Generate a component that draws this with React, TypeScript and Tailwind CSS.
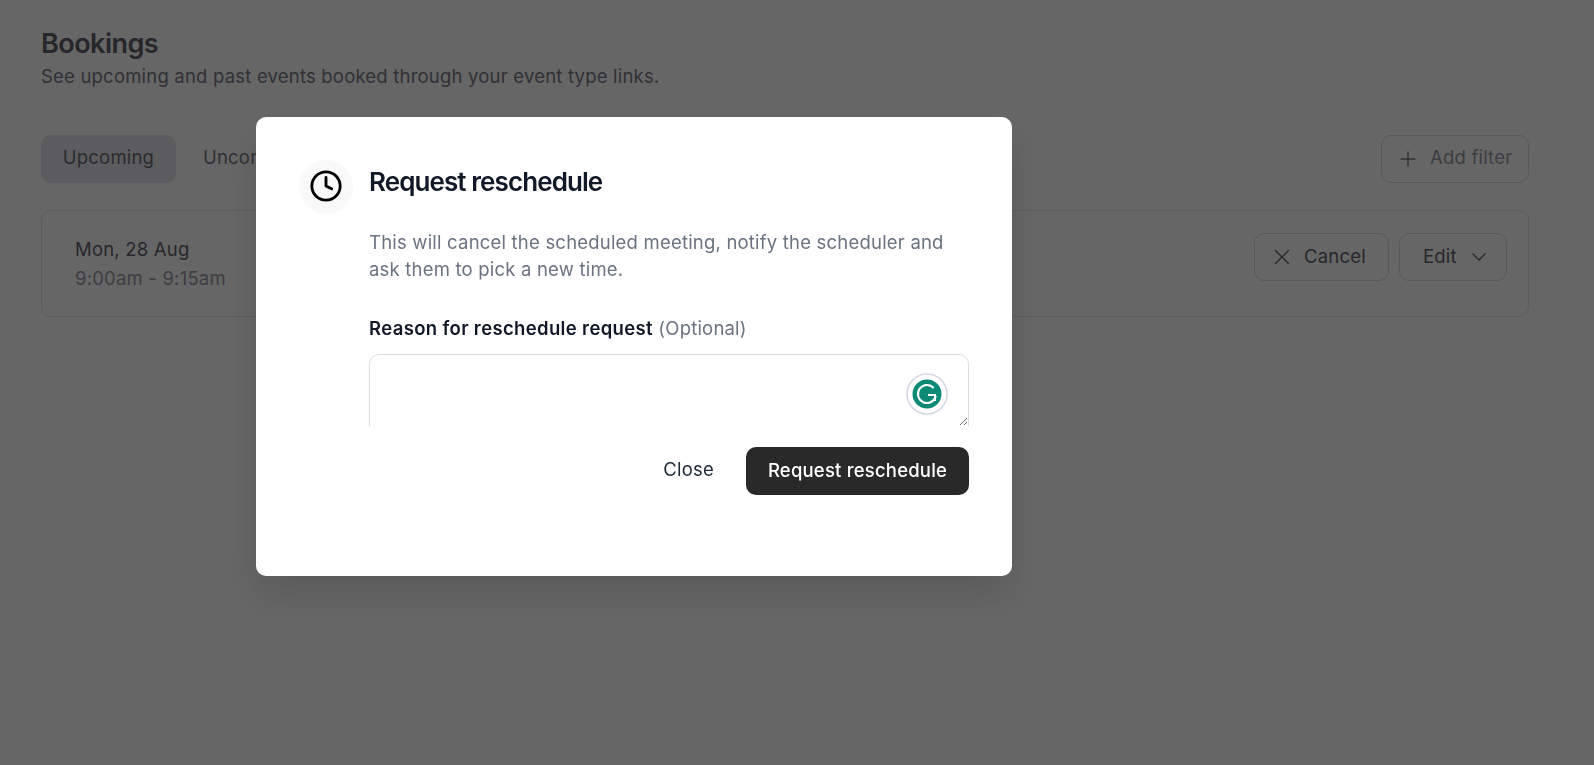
import React from "react";
import { Clock, Plus, X, ChevronDown } from "lucide-react";

export default function App() {
  return (
    <div className="relative h-[765px] w-full overflow-hidden bg-white font-['Inter',sans-serif] text-[18.5px] tracking-[0.2px]">
      <div className="pt-[28px] pr-[65px] pl-[41px]">
        <h1 className="text-[27px] leading-[32px] font-semibold tracking-[-0.02em] text-[#5f5f6b]">Bookings</h1>
        <p className="mt-[2px] leading-[28px] text-[#7a7a88]">See upcoming and past events booked through your event type links.</p>
        <div className="mt-[45px] flex items-center justify-between">
          <div className="flex items-center gap-[6px]">
            <div className="flex h-[48px] w-[135px] items-center justify-center rounded-[10px] bg-[#e5e7eb] pb-[2px] text-[#6b6b78]">Upcoming</div>
            <div className="flex h-[48px] items-center px-[21px] pb-[2px] text-[#7a7a88]">Unconfirmed</div>
          </div>
          <div className="flex h-[48px] w-[148px] items-center gap-[10px] rounded-[10px] border border-[#dcdde2] pl-[14px] text-[#9a9aa5]">
            <Plus size={24} strokeWidth={1.4} className="text-[#7a7a88]" />
            <span className="pb-[2px]">Add filter</span>
          </div>
        </div>
        <div className="mt-[27px] flex h-[107px] justify-between rounded-[10px] border border-[#e5e7eb] pt-[22px] pr-[21px] pl-[33px]">
          <div className="pt-[2px]">
            <div className="leading-[28px] text-[#63636f]">Mon, 28 Aug</div>
            <div className="mt-[1px] leading-[28px] text-[#9a9aa5]">9:00am - 9:15am</div>
          </div>
          <div className="flex h-[48px] items-center gap-[10px]">
            <div className="flex h-[48px] w-[135px] items-center gap-[9px] rounded-[10px] border border-[#dcdde2] pl-[14px] text-[#63636f]">
              <X size={26} strokeWidth={1.3} />
              <span className="pb-[1px]">Cancel</span>
            </div>
            <div className="flex h-[48px] w-[108px] items-center gap-[10px] rounded-[10px] border border-[#dcdde2] pl-[23px] text-[#63636f]">
              <span className="pb-[1px]">Edit</span>
              <ChevronDown size={24} strokeWidth={1.4} />
            </div>
          </div>
        </div>
      </div>

      <div className="fixed inset-0 bg-black/60 pt-[117px] pl-[256px]">
        <div className="h-[459px] w-[756px] rounded-[10px] bg-white p-[43px] shadow-[0_20px_40px_rgba(0,0,0,0.12)]">
          <div className="flex gap-[16px]">
            <div className="flex h-[54px] w-[54px] shrink-0 items-center justify-center rounded-full bg-[#f9f9fa] pb-[3px]">
              <Clock size={34} strokeWidth={2} className="text-black" />
            </div>
            <div className="min-w-0 flex-1">
              <h2 className="mt-[4px] text-[26px] leading-[36px] font-semibold tracking-[-0.035em] text-[#111827]">Request reschedule</h2>
              <p className="mt-[29px] leading-[27px] text-[#6b7280]">
                This will cancel the scheduled meeting, notify the scheduler and ask them to pick a new time.
              </p>
              <div className="mt-[31px] leading-[28px] text-[#6b7280]">
                <span className="font-semibold tracking-[0.35px] text-[#111827]">Reason for reschedule request</span> (Optional)
              </div>
              <div className="relative mt-[12px] h-[72px] overflow-hidden">
                <textarea className="block h-[73px] w-full rounded-t-[10px] rounded-b-none border border-[#dcdee5] bg-white" />
                <svg width="42" height="42" viewBox="0 0 42 42" className="absolute top-[19px] right-[21px]">
                  <circle cx="21" cy="21" r="20" fill="#fff" stroke="#d5d7e2" strokeWidth="1.5" />
                  <circle cx="21" cy="21" r="14.5" fill="#0d8a76" />
                  <path d="M29 17a9 9 0 1 0 0 8" transform="rotate(-15 21 21)" fill="none" stroke="#fff" strokeWidth="2" />
                  <path d="M22 22h7v6" fill="none" stroke="#fff" strokeWidth="2" />
                </svg>
              </div>
            </div>
          </div>
          <div className="mt-[21px] flex items-center justify-end gap-[32px]">
            <button className="pb-[2px] text-[#1f2937]">Close</button>
            <button className="flex h-[48px] w-[223px] items-center justify-center rounded-[10px] bg-[#292929] pb-[1px] font-medium text-white">Request reschedule</button>
          </div>
        </div>
      </div>
    </div>
  );
}
